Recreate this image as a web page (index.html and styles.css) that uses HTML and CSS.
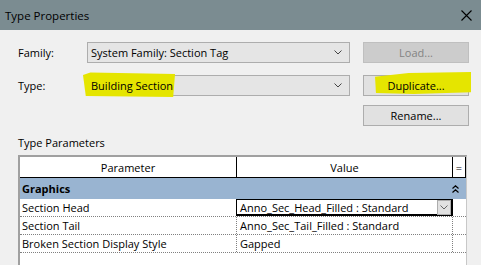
FILE: index.html
```html
<!DOCTYPE html>
<html lang="en">
<head>
  <meta charset="UTF-8" />
  <title>Type Properties</title>
  <link rel="stylesheet" href="styles.css">
</head>
<body>
  <div class="dialog">

    <!-- Title bar -->
    <div class="titlebar">
      <span class="title">Type Properties</span>
      <svg class="close" width="11" height="11" viewBox="0 0 11 11">
        <path d="M0.5 0.5 L10.5 10.5 M10.5 0.5 L0.5 10.5" stroke="#000" stroke-width="1.1" fill="none"/>
      </svg>
    </div>

    <div class="content">
      <!-- Family / Type pickers -->
      <div class="field-row">
        <span class="field-label">Family:</span>
        <div class="combo">
          <span>System Family: Section Tag</span>
          <svg class="chev" width="8" height="5" viewBox="0 0 8 5"><path d="M0.5 0.5 L4 4 L7.5 0.5" stroke="#444" fill="none"/></svg>
        </div>
        <button class="btn disabled">Load...</button>
      </div>

      <div class="field-row">
        <span class="field-label">Type:</span>
        <div class="combo">
          <span class="mark mark-type">Building Section</span>
          <svg class="chev" width="8" height="5" viewBox="0 0 8 5"><path d="M0.5 0.5 L4 4 L7.5 0.5" stroke="#444" fill="none"/></svg>
        </div>
        <button class="btn mark-btn">Duplicate...</button>
      </div>

      <div class="field-row rename-row">
        <button class="btn">Rename...</button>
      </div>

      <div class="section-label">Type Parameters</div>

      <!-- Property grid -->
      <div class="props">
        <div class="props-head">
          <div class="hcell">Parameter</div>
          <div class="hcell">Value</div>
          <div class="hcell eq">=</div>
        </div>

        <div class="group">
          <span>Graphics</span>
          <svg class="collapse" width="7" height="8" viewBox="0 0 7 8">
            <path d="M0.5 3.5 L3.5 0.8 L6.5 3.5 M0.5 7.5 L3.5 4.8 L6.5 7.5" stroke="#000" stroke-width="1.2" fill="none"/>
          </svg>
        </div>

        <div class="prop-row">
          <div class="cell name">Section Head</div>
          <div class="cell value selected">
            <span>Anno_Sec_Head_Filled : Standard</span>
            <span class="drop">
              <svg width="8" height="5" viewBox="0 0 8 5"><path d="M0.5 0.5 L4 4 L7.5 0.5" stroke="#666" fill="none"/></svg>
            </span>
          </div>
          <div class="cell eq"></div>
        </div>
        <div class="prop-row">
          <div class="cell name">Section Tail</div>
          <div class="cell value">Anno_Sec_Tail_Filled : Standard</div>
          <div class="cell eq"></div>
        </div>
        <div class="prop-row">
          <div class="cell name">Broken Section Display Style</div>
          <div class="cell value">Gapped</div>
          <div class="cell eq"></div>
        </div>
      </div>
    </div>
  </div>
</body>
</html>
```

FILE: styles.css
```css
/* — Base — */
* { box-sizing: border-box; margin: 0; padding: 0; }
body {
  width: 481px; height: 265px; overflow: hidden;
  background: #f0f0f0;
  font-family: "Open Sans", "Noto Sans", sans-serif;
  font-size: 11px;
  color: #000;
}

/* — Title bar — */
.titlebar {
  height: 30px;
  background: #7b8c91;
  display: flex; justify-content: space-between; align-items: center;
  padding: 0 9px 0 5px;
}
.title { font-size: 11.5px; color: #000; }
.close { display: block; margin-top: 1px; }

/* — Content — */
.content { padding: 12px 12px 0 18px; }

.field-row {
  display: flex; align-items: center;
  height: 21px; margin-bottom: 12px;
}
.field-row + .field-row { margin-bottom: 9px; }
.field-row.rename-row { justify-content: flex-end; margin-bottom: 0; }
.field-label { width: 69px; }

.combo {
  position: relative; z-index: 0;
  width: 263px; height: 21px;
  background: #e5e5e5; border: 1px solid #adadad;
  display: flex; align-items: center; justify-content: space-between;
  padding: 0 7px 0 3px;
}
.chev { display: block; }

.btn {
  position: relative; z-index: 0;
  width: 106px; height: 21px; margin-left: 13px;
  background: #e1e1e1; border: 1px solid #adadad;
  font-family: inherit; font-size: 11px; color: #000;
}
.btn.disabled { background: #cccccc; border-color: #bfbfbf; color: #838383; }

/* — Highlighter marks — */
.mark { position: relative; }
.mark-type::before {
  content: ""; position: absolute; z-index: -1;
  left: -8px; right: -2px; top: -6px; bottom: -4px;
  background: #e5e500;
  clip-path: polygon(0 12%, 8% 2%, 100% 8%, 98% 100%, 3% 96%);
}
.mark-btn::before {
  content: ""; position: absolute; z-index: -1;
  left: 11px; right: -3px; top: -4px; bottom: 1px;
  background: #e5e500;
  clip-path: polygon(0 22%, 35% 4%, 100% 0, 100% 92%, 40% 100%, 1% 96%);
}

.section-label { margin: 9px 0 5px; height: 15px; line-height: 15px; }

/* — Property grid — */
.props {
  width: 449px; height: 120px;
  background: #fff;
  border-left: 2px solid #a0a0a0;
  border-top: 2px solid #a0a0a0;
  border-right: 1px solid #c8c8c8;
}
.props-head, .prop-row {
  display: grid;
  grid-template-columns: 217px 216px 13px;
}
.props-head { height: 21px; border-bottom: 1px solid #000; }
.hcell {
  display: flex; align-items: center; justify-content: center;
  border-right: 1px solid #000;
}
.hcell.eq { border-left: 1px solid #000; border-right: 1px solid #000; margin-left: -1px; }

.group {
  height: 21px; background: #99b4d1;
  display: flex; align-items: center; justify-content: space-between;
  padding: 0 7px 0 2px;
  font-weight: 700;
}
.collapse { display: block; }

.prop-row { height: 18px; border-bottom: 1px dotted #808080; }
.cell {
  display: flex; align-items: center;
  border-right: 1px dotted #808080;
  white-space: nowrap;
}
.cell.name { padding-left: 2px; }
.cell.value { padding-left: 3px; }
.cell.eq { border-right: none; }
.cell.selected {
  justify-content: space-between;
  padding-right: 2px;
  border-right: none;
  margin-left: -1px; padding-left: 4px;
  box-shadow: inset 0 0 0 1px #000, inset -1px -1px 0 1px #000;
}
.drop {
  width: 14px; height: 15px;
  background: #e1e1e1; border: 1px solid #adadad;
  display: flex; align-items: center; justify-content: center;
}
.drop svg { display: block; }
```
